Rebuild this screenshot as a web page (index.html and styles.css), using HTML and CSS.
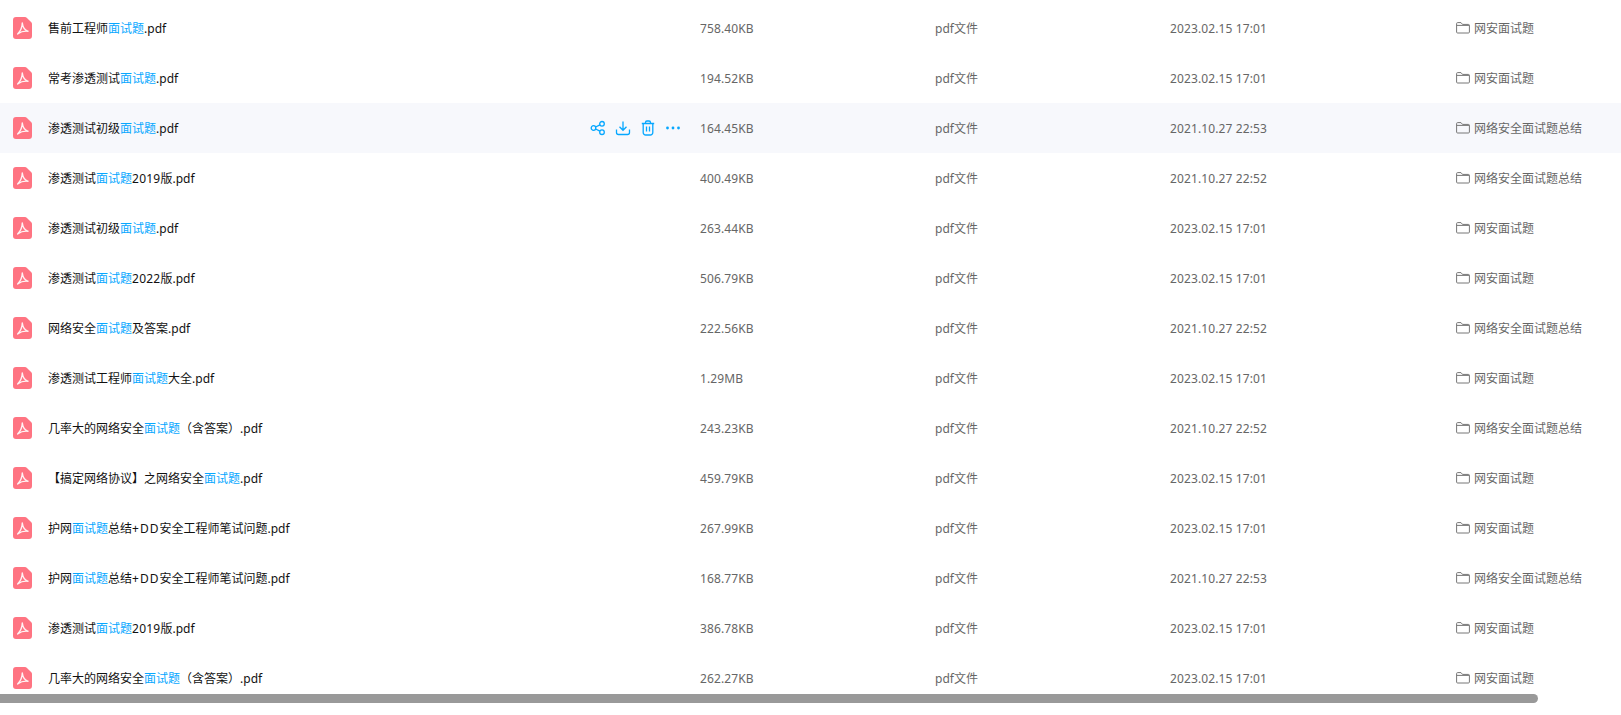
FILE: index.html
```html
<!DOCTYPE html>
<html>
  <head>
    <title>网盘文件列表</title>
    <meta name="viewport" content="width=device-width, initial-scale=1.0">
    <link rel="stylesheet" href="styles.css">
  </head>
  <body>
    <svg class="defs" width="0" height="0">
      <symbol id="pdf" viewBox="0 0 19 22">
        <path d="M3 0H12Q13 0 13.700 .7L18.300 5.300Q19 6 19 7V19A3 3 0 0 1 16 22H3A3 3 0 0 1 0 19V3A3 3 0 0 1 3 0Z" fill="#ff7482"/>
        <path d="M9.300 6C9.200 9.500 8 13.500 4.700 17M9.300 6C9.700 10 11.800 13 15 14.300M5 16.700C8 14.500 11.500 13.800 15 14.200" fill="none" stroke="#fff" stroke-width="1.400" stroke-linecap="round" stroke-opacity=".92"/>
      </symbol>
      <symbol id="folder" viewBox="0 0 14 12">
        <path d="M.6 10V1.600A1 1 0 0 1 1.600 .6H5L6.500 2.400H12.400A1 1 0 0 1 13.400 3.400V10A1 1 0 0 1 12.400 11H1.600A1 1 0 0 1 .6 10ZM.6 3.400H13.400" fill="none" stroke="#777" stroke-width="1"/>
      </symbol>
    </svg>

    <div class="list">
      <div class="row">
        <div class="name"><svg class="pdf"><use href="#pdf"/></svg><span>售前工程师<em>面试题</em>.pdf</span></div>
        <div class="cell num">758.40KB</div><div class="cell">pdf文件</div><div class="cell num">2023.02.15 17:01</div>
        <div class="cell path"><svg class="folder"><use href="#folder"/></svg>网安面试题</div>
      </div>
      <div class="row">
        <div class="name"><svg class="pdf"><use href="#pdf"/></svg><span>常考渗透测试<em>面试题</em>.pdf</span></div>
        <div class="cell num">194.52KB</div><div class="cell">pdf文件</div><div class="cell num">2023.02.15 17:01</div>
        <div class="cell path"><svg class="folder"><use href="#folder"/></svg>网安面试题</div>
      </div>
      <div class="row hover">
        <div class="name"><svg class="pdf"><use href="#pdf"/></svg><span>渗透测试初级<em>面试题</em>.pdf</span>
          <div class="actions">
            <svg viewBox="0 0 16 16"><circle cx="3.500" cy="8" r="2.300"/><circle cx="12" cy="3.800" r="2.300"/><circle cx="12" cy="12.200" r="2.300"/><path d="M5.600 7 9.900 4.800M5.600 9 9.900 11.200"/></svg>
            <svg viewBox="0 0 16 16"><path d="M8 1.500V10M4.500 6.800 8 10.300 11.500 6.800M1.500 9.500V12.500A2 2 0 0 0 3.500 14.500H12.500A2 2 0 0 0 14.500 12.500V9.500"/></svg>
            <svg viewBox="0 0 16 16"><path d="M1.800 3.500H14.200M5.500 3.500V2.500A1.500 1.500 0 0 1 7 1H9A1.500 1.500 0 0 1 10.500 2.500V3.500M3.200 3.500V12.500A2.500 2.500 0 0 0 5.700 15H10.300A2.500 2.500 0 0 0 12.800 12.500V3.500M6.500 6.500V11.500M9.500 6.500V11.500"/></svg>
            <svg viewBox="0 0 16 16"><circle class="dot" cx="2.500" cy="8" r="1.400"/><circle class="dot" cx="8" cy="8" r="1.400"/><circle class="dot" cx="13.500" cy="8" r="1.400"/></svg>
          </div>
        </div>
        <div class="cell num">164.45KB</div><div class="cell">pdf文件</div><div class="cell num">2021.10.27 22:53</div>
        <div class="cell path"><svg class="folder"><use href="#folder"/></svg>网络安全面试题总结</div>
      </div>
      <div class="row">
        <div class="name"><svg class="pdf"><use href="#pdf"/></svg><span>渗透测试<em>面试题</em><b>2019</b>版.pdf</span></div>
        <div class="cell num">400.49KB</div><div class="cell">pdf文件</div><div class="cell num">2021.10.27 22:52</div>
        <div class="cell path"><svg class="folder"><use href="#folder"/></svg>网络安全面试题总结</div>
      </div>
      <div class="row">
        <div class="name"><svg class="pdf"><use href="#pdf"/></svg><span>渗透测试初级<em>面试题</em>.pdf</span></div>
        <div class="cell num">263.44KB</div><div class="cell">pdf文件</div><div class="cell num">2023.02.15 17:01</div>
        <div class="cell path"><svg class="folder"><use href="#folder"/></svg>网安面试题</div>
      </div>
      <div class="row">
        <div class="name"><svg class="pdf"><use href="#pdf"/></svg><span>渗透测试<em>面试题</em><b>2022</b>版.pdf</span></div>
        <div class="cell num">506.79KB</div><div class="cell">pdf文件</div><div class="cell num">2023.02.15 17:01</div>
        <div class="cell path"><svg class="folder"><use href="#folder"/></svg>网安面试题</div>
      </div>
      <div class="row">
        <div class="name"><svg class="pdf"><use href="#pdf"/></svg><span>网络安全<em>面试题</em>及答案.pdf</span></div>
        <div class="cell num">222.56KB</div><div class="cell">pdf文件</div><div class="cell num">2021.10.27 22:52</div>
        <div class="cell path"><svg class="folder"><use href="#folder"/></svg>网络安全面试题总结</div>
      </div>
      <div class="row">
        <div class="name"><svg class="pdf"><use href="#pdf"/></svg><span>渗透测试工程师<em>面试题</em>大全.pdf</span></div>
        <div class="cell num">1.29MB</div><div class="cell">pdf文件</div><div class="cell num">2023.02.15 17:01</div>
        <div class="cell path"><svg class="folder"><use href="#folder"/></svg>网安面试题</div>
      </div>
      <div class="row">
        <div class="name"><svg class="pdf"><use href="#pdf"/></svg><span>几率大的网络安全<em>面试题</em>（含答案）.pdf</span></div>
        <div class="cell num">243.23KB</div><div class="cell">pdf文件</div><div class="cell num">2021.10.27 22:52</div>
        <div class="cell path"><svg class="folder"><use href="#folder"/></svg>网络安全面试题总结</div>
      </div>
      <div class="row">
        <div class="name"><svg class="pdf"><use href="#pdf"/></svg><span>【搞定网络协议】之网络安全<em>面试题</em>.pdf</span></div>
        <div class="cell num">459.79KB</div><div class="cell">pdf文件</div><div class="cell num">2023.02.15 17:01</div>
        <div class="cell path"><svg class="folder"><use href="#folder"/></svg>网安面试题</div>
      </div>
      <div class="row">
        <div class="name"><svg class="pdf"><use href="#pdf"/></svg><span>护网<em>面试题</em>总结<b class="wide">+DD</b>安全工程师笔试问题.pdf</span></div>
        <div class="cell num">267.99KB</div><div class="cell">pdf文件</div><div class="cell num">2023.02.15 17:01</div>
        <div class="cell path"><svg class="folder"><use href="#folder"/></svg>网安面试题</div>
      </div>
      <div class="row">
        <div class="name"><svg class="pdf"><use href="#pdf"/></svg><span>护网<em>面试题</em>总结<b class="wide">+DD</b>安全工程师笔试问题.pdf</span></div>
        <div class="cell num">168.77KB</div><div class="cell">pdf文件</div><div class="cell num">2021.10.27 22:53</div>
        <div class="cell path"><svg class="folder"><use href="#folder"/></svg>网络安全面试题总结</div>
      </div>
      <div class="row">
        <div class="name"><svg class="pdf"><use href="#pdf"/></svg><span>渗透测试<em>面试题</em><b>2019</b>版.pdf</span></div>
        <div class="cell num">386.78KB</div><div class="cell">pdf文件</div><div class="cell num">2023.02.15 17:01</div>
        <div class="cell path"><svg class="folder"><use href="#folder"/></svg>网安面试题</div>
      </div>
      <div class="row">
        <div class="name"><svg class="pdf"><use href="#pdf"/></svg><span>几率大的网络安全<em>面试题</em>（含答案）.pdf</span></div>
        <div class="cell num">262.27KB</div><div class="cell">pdf文件</div><div class="cell num">2023.02.15 17:01</div>
        <div class="cell path"><svg class="folder"><use href="#folder"/></svg>网安面试题</div>
      </div>
    </div>

    <div class="scrollbar"></div>
  </body>
</html>
```

FILE: styles.css
```css
html, body {
  height: 715px;
  overflow: hidden;
}
body {
  background-color: #fff;
  color: #25262b;
  font-family: "Noto Sans", "Noto Sans CJK SC", sans-serif;
  font-size: 12px;
  margin: 0;
  padding: 0;
  position: relative;
}
.defs {
  position: absolute;
}
.list {
  padding-top: 3px;
}
.row {
  display: grid;
  grid-template-columns: 700px 235px 235px 286px 1fr;
  height: 50px;
  align-items: center;
}
.row.hover {
  background-color: #f7f8fc;
}
.name {
  display: flex;
  align-items: center;
  padding-left: 13px;
  padding-right: 19px;
  height: 100%;
  color: #111;
}
.name em {
  color: #06a7ff;
  font-style: normal;
}
.name b {
  font-weight: normal;
  letter-spacing: .25px;
}
.name b.wide {
  letter-spacing: 1px;
}
.pdf {
  width: 19px;
  height: 22px;
  margin-right: 16px;
  flex: none;
}
.actions {
  display: flex;
  gap: 9px;
  margin-left: auto;
}
.actions svg {
  width: 16px;
  height: 16px;
  fill: none;
  stroke: #06a7ff;
  stroke-width: 1.300;
}
.actions .dot {
  fill: #06a7ff;
  stroke: none;
}
.cell {
  color: #666;
}
.num {
  letter-spacing: .12px;
}
.path {
  display: flex;
  align-items: center;
}
.folder {
  width: 14px;
  height: 12px;
  margin-right: 4px;
  margin-top: -1px;
  flex: none;
}
.scrollbar {
  position: absolute;
  left: 0;
  top: 694px;
  width: 1538px;
  height: 9px;
  background-color: #999;
  border-radius: 0 5px 5px 0;
}
```
